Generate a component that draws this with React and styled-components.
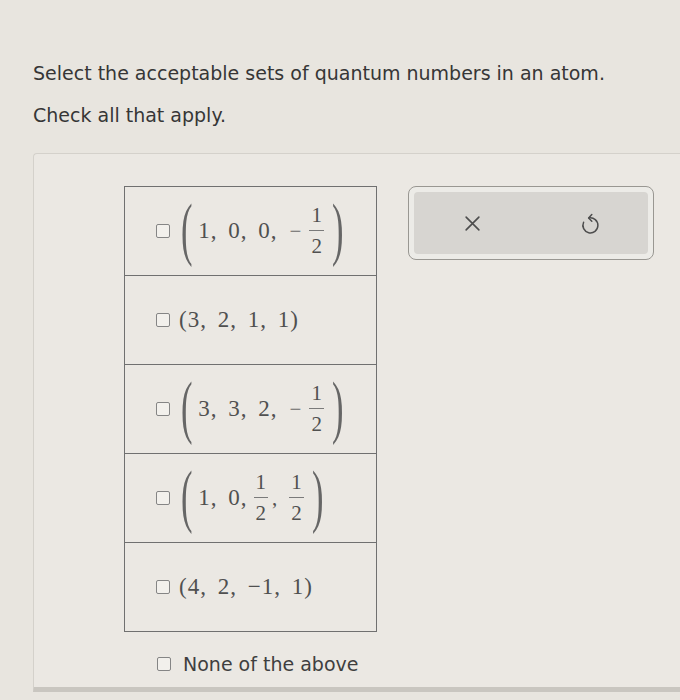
import React from "react";
import styled, { createGlobalStyle } from "styled-components";

const GlobalStyle = createGlobalStyle`
  html, body {
    margin: 0;
    padding: 0;
    background: #e8e5df;
  }
  body {
    font-family: "DejaVu Sans", Verdana, sans-serif;
    color: #3b3b3b;
  }
`;

const options = [
  { id: 1, parts: ["1, 0, 0,"], frac: [{ neg: true }] },
  { id: 2, plain: "(3, 2, 1, 1)" },
  { id: 3, parts: ["3, 3, 2,"], frac: [{ neg: true }] },
  { id: 4, parts: ["1, 0,"], frac: [{ neg: false, comma: true }, { neg: false }] },
  { id: 5, plain: "(4, 2, \u22121, 1)" },
];

const Fraction = ({ neg, comma }) => (
  <FracWrap>
    {neg && <Minus>{"\u2212"}</Minus>}
    <Frac>
      <Num>1</Num>
      <Den>2</Den>
    </Frac>
    {comma && <FracComma>,</FracComma>}
  </FracWrap>
);

const UndoIcon = () => (
  <svg width="20" height="24" viewBox="0 0 20 24" fill="none">
    <path
      d="M9 7 A7.5 7.5 0 1 1 3.6 11.2"
      stroke="#4d4d4d"
      strokeWidth="1.5"
      strokeLinecap="round"
    />
    <path
      d="M11.8 3.6 L8.6 7 L11.8 10.2"
      stroke="#4d4d4d"
      strokeWidth="1.5"
      strokeLinecap="round"
      strokeLinejoin="round"
    />
  </svg>
);

const CloseIcon = () => (
  <svg width="17" height="17" viewBox="0 0 16 16" fill="none">
    <path d="M2 2 L14 14 M14 2 L2 14" stroke="#4d4d4d" strokeWidth="1.5" strokeLinecap="round" />
  </svg>
);

const App = () => {
  return (
    <>
      <GlobalStyle />
      <Page>
        <Prompt>Select the acceptable sets of quantum numbers in an atom.</Prompt>
        <Instruction>Check all that apply.</Instruction>
        <Panel>
          <Top>
            <Table>
              {options.map((opt) => (
                <Row key={opt.id}>
                  <Box />
                  {opt.plain ? (
                    <Plain>{opt.plain}</Plain>
                  ) : (
                    <Expr>
                      <Paren>(</Paren>
                      <Inner>{opt.parts[0]}</Inner>
                      {opt.frac.map((f, i) => (
                        <Fraction key={i} {...f} />
                      ))}
                      <Paren $close>)</Paren>
                    </Expr>
                  )}
                </Row>
              ))}
            </Table>
            <Tools>
              <ToolInner>
                <ToolButton aria-label="clear">
                  <CloseIcon />
                </ToolButton>
                <ToolButton aria-label="undo">
                  <UndoIcon />
                </ToolButton>
              </ToolInner>
            </Tools>
          </Top>
          <NoneRow>
            <Box />
            <NoneLabel>None of the above</NoneLabel>
          </NoneRow>
        </Panel>
      </Page>
    </>
  );
};

const Page = styled.div`
  padding: 59px 0 0 33px;
  height: 700px;
  box-sizing: border-box;
  overflow: hidden;
`;

const Prompt = styled.p`
  margin: 0;
  font-size: 19px;
  line-height: 28px;
  color: #363636;
`;

const Instruction = styled.p`
  margin: 14px 0 0;
  font-size: 19px;
  line-height: 28px;
  color: #363636;
`;

const Panel = styled.div`
  margin-top: 24px;
  border: 1px solid #d4d1cb;
  border-right: none;
  border-bottom: 5px solid #c9c6c0;
  border-radius: 4px 0 0 0;
  background: #ebe8e3;
  padding: 32px 0 8px 90px;
  height: 539px;
  box-sizing: border-box;
`;

const Top = styled.div`
  display: flex;
  align-items: flex-start;
`;

const Table = styled.div`
  width: 251px;
  border: 1.5px solid #707070;
  display: flex;
  flex-direction: column;
`;

const Row = styled.div`
  height: 88px;
  display: flex;
  align-items: center;
  padding-left: 31px;
  border-bottom: 1.5px solid #707070;

  &:last-child {
    border-bottom: none;
  }
`;

const Box = styled.span`
  width: 12px;
  height: 12px;
  border: 1.5px solid #858585;
  border-radius: 2px;
  flex-shrink: 0;
  background: #f2f0ec;
`;

const mathFont = `
  font-family: "Liberation Serif", "Times New Roman", serif;
  font-size: 23px;
  color: #505050;
  letter-spacing: 1px;
  word-spacing: 4px;
  white-space: pre;
`;

const Plain = styled.span`
  ${mathFont}
  margin-left: 9px;
`;

const Inner = styled.span`
  ${mathFont}
`;

const Expr = styled.span`
  display: inline-flex;
  align-items: center;
  margin-left: 9px;
  font-family: "Liberation Serif", "Times New Roman", serif;
  color: #505050;
`;

const Paren = styled.span`
  font-size: 46px;
  line-height: 1;
  display: inline-block;
  transform: scale(0.75, 1.5);
  color: #666;
  margin: -4px ${(p) => (p.$close ? "0 0 6px" : "4px 0 0")};
`;

const FracWrap = styled.span`
  display: inline-flex;
  align-items: center;
  font-size: 21px;
  margin-left: 6px;
`;

const Minus = styled.span`
  margin: 0 8px 0 6px;
  color: #6a6a6a;
`;

const Frac = styled.span`
  display: inline-flex;
  flex-direction: column;
  align-items: center;
  line-height: 1.1;
`;

const Num = styled.span`
  padding: 0 2px 3px;
  border-bottom: 1px solid #7a7a7a;
`;

const Den = styled.span`
  padding: 4px 2px 0;
`;

const FracComma = styled.span`
  margin: 0 6px 0 4px;
`;

const Tools = styled.div`
  margin-left: 31px;
  margin-top: 0;
  width: 246px;
  height: 74px;
  box-sizing: border-box;
  border: 1px solid #999792;
  border-radius: 8px;
  background: #ecebe7;
  padding: 5px;
`;

const ToolInner = styled.div`
  height: 100%;
  display: flex;
  background: #d7d5d1;
  border-radius: 4px;
`;

const ToolButton = styled.button`
  flex: 1;
  border: none;
  background: transparent;
  display: flex;
  align-items: center;
  justify-content: center;
  padding: 0;
  cursor: pointer;
`;

const NoneRow = styled.div`
  display: flex;
  align-items: center;
  margin-top: 21px;
  margin-left: 33px;
`;

const NoneLabel = styled.span`
  font-size: 19px;
  color: #3f3f3f;
  margin-left: 12px;
`;

export default App;
